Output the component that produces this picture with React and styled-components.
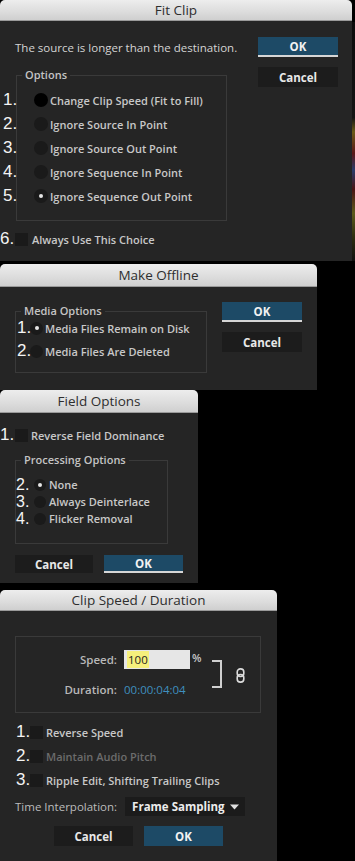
import React from 'react';
import styled, { createGlobalStyle, css } from 'styled-components';

const GlobalStyle = createGlobalStyle`
  html, body {
    margin: 0;
    padding: 0;
    background: #000;
  }
  * {
    box-sizing: border-box;
  }
`;

const Page = styled.div`
  width: 355px;
  height: 861px;
  overflow: hidden;
  background: #000;
  display: flex;
  flex-direction: column;
  font-family: 'Open Sans', 'DejaVu Sans', sans-serif;
  font-size: 11px;
  font-weight: 600;
  color: #c8c8c8;
`;

const TopStrip = styled.div`
  display: flex;
`;

const VideoEdge = styled.div`
  flex: 1;
  margin-top: 22px;
  height: 239px;
  background: linear-gradient(
    180deg,
    #0c0c0c 0%,
    #151515 40%,
    #6b5a18 46%,
    #5a1818 55%,
    #2a3c6a 62%,
    #4a1414 70%,
    #5c5a1c 80%,
    #2d2d10 90%,
    #111 100%
  );
`;

const Window = styled.section`
  width: ${(p) => p.$w}px;
  margin-top: ${(p) => p.$gap || 0}px;
  flex-shrink: 0;
`;

const TitleBar = styled.header`
  height: ${(p) => p.$h}px;
  border-radius: 5px 5px 0 0;
  background: linear-gradient(180deg, #ededed 0%, #dcdcdc 60%, #cfcfcf 100%);
  border-bottom: 1px solid #9a9a9a;
  display: flex;
  align-items: center;
  justify-content: center;
  font-family: 'Open Sans', 'DejaVu Sans', sans-serif;
  font-weight: 400;
  font-size: 13.5px;
  color: #2e2e2e;
`;

const Body = styled.div`
  height: ${(p) => p.$h}px;
  background: #252525;
  padding: ${(p) => p.$pad};
  position: relative;
`;

const Split = styled.div`
  display: flex;
  align-items: flex-start;
`;

const Main = styled.div`
  flex: 1;
  display: flex;
  flex-direction: column;
`;

const ButtonCol = styled.div`
  width: 80px;
  display: flex;
  flex-direction: column;
  gap: 10px;
`;

const ButtonRow = styled.div`
  display: flex;
  gap: 11px;
  justify-content: ${(p) => p.$justify || 'flex-start'};
  margin-top: ${(p) => p.$top}px;
  padding-right: ${(p) => p.$right || 0}px;
`;

const Button = styled.button`
  width: ${(p) => p.$w || 80}px;
  height: ${(p) => p.$h || 20}px;
  border: none;
  padding: 0;
  font-family: 'Open Sans', 'DejaVu Sans', sans-serif;
  font-size: 11.5px;
  font-weight: 700;
  color: #e8e8e8;
  background: #1c1c1c;
  ${(p) =>
    p.$primary &&
    css`
      background: #1d4a66;
      color: #f2f2f2;
    `}
  ${(p) =>
    p.$focus &&
    css`
      border-bottom: 2px solid #d6d6d6;
    `}
`;

const Message = styled.div`
  height: 20px;
  display: flex;
  align-items: center;
  font-weight: 400;
  font-size: 11.5px;
  color: #d4d4d4;
`;

const GroupBox = styled.fieldset`
  margin: ${(p) => p.$margin};
  width: ${(p) => p.$w}px;
  padding: ${(p) => p.$pad};
  border: 1px solid #3a3a3a;
  min-width: 0;
`;

const Legend = styled.legend`
  margin-left: 5px;
  padding: 0 3px;
  line-height: 14px;
  font-weight: 600;
  color: #c4c4c4;
`;

const Row = styled.div`
  position: relative;
  height: ${(p) => p.$h}px;
  display: flex;
  align-items: center;
  gap: ${(p) => p.$gap || 2}px;
  padding-left: ${(p) => p.$indent || 0}px;
  margin-top: ${(p) => p.$top || 0}px;
  color: ${(p) => (p.$disabled ? '#6c6c6c' : '#c8c8c8')};
`;

const Num = styled.span`
  position: absolute;
  left: ${(p) => p.$x}px;
  top: 50%;
  transform: translateY(-50%);
  font-family: 'Liberation Sans', Arial, sans-serif;
  font-weight: 400;
  font-size: ${(p) => p.$size || 17}px;
  line-height: 12px;
  color: #f4f4f4;
`;

const Radio = styled.span`
  width: ${(p) => p.$size}px;
  height: ${(p) => p.$size}px;
  border-radius: 50%;
  flex-shrink: 0;
  background: ${(p) => (p.$hot ? '#000' : '#1a1a1a')};
  display: flex;
  align-items: center;
  justify-content: center;
  &::after {
    content: '';
    display: ${(p) => (p.$on ? 'block' : 'none')};
    width: 4px;
    height: 4px;
    border-radius: 50%;
    background: #e6e6e6;
  }
`;

const Check = styled.span`
  width: ${(p) => p.$size || 13}px;
  height: ${(p) => p.$size || 13}px;
  flex-shrink: 0;
  background: #1a1a1a;
`;

const Panel = styled.div`
  width: 246px;
  height: 77px;
  border: 1px solid #3a3a3a;
  padding-top: 12px;
  display: flex;
  align-items: flex-start;
`;

const Fields = styled.div`
  display: grid;
  grid-template-columns: 101px 66px 8px;
  grid-auto-rows: 20px;
  row-gap: 10px;
  column-gap: 7px;
  align-items: center;
`;

const FieldLabel = styled.span`
  text-align: right;
  font-weight: 600;
  font-size: 11.5px;
  color: #b8b8b8;
`;

const SpeedInput = styled.div`
  height: 19px;
  background: #e6e6e6;
  padding-left: 3px;
  display: flex;
  align-items: center;
  font-weight: 400;
  font-size: 11.5px;
  color: #1e1e1e;
  mark {
    background: #f6f07c;
    color: #1e1e1e;
    padding: 1px 1px;
  }
`;

const Percent = styled.span`
  margin-left: -5px;
  align-self: start;
  margin-top: 1px;
  font-weight: 600;
  color: #c8c8c8;
`;

const Timecode = styled.span`
  font-weight: 400;
  font-size: 11.5px;
  color: #3f8fbf;
`;

const Bracket = styled.div`
  width: 10px;
  height: 28px;
  margin: 11px 0 0 7px;
  border: 2px solid #d0d0d0;
  border-left: none;
`;

const LinkIcon = styled.svg`
  margin: 19px 0 0 14px;
`;

const InterpRow = styled.div`
  display: flex;
  align-items: center;
  gap: 8px;
  margin-top: 5px;
`;

const InterpLabel = styled.span`
  font-weight: 400;
  font-size: 11.5px;
  color: #bcbcbc;
`;

const Dropdown = styled.div`
  width: 120px;
  height: 19px;
  background: #1b1b1b;
  display: flex;
  align-items: center;
  justify-content: space-between;
  padding: 0 6px 0 7px;
  font-weight: 700;
  font-size: 11.5px;
  color: #ececec;
`;

const FitClip = () => (
  <TopStrip>
    <Window $w={352}>
      <TitleBar $h={21}>Fit Clip</TitleBar>
      <Body $h={240} $pad="16px 14px 0 15px">
        <Split>
          <Main>
            <Message>The source is longer than the destination.</Message>
            <GroupBox $w={211} $margin="11px 0 0 1px" $pad="6px 0 12px 0">
              <Legend>Options</Legend>
              {[
                ['1.', 'Change Clip Speed (Fit to Fill)', false, true],
                ['2.', 'Ignore Source In Point'],
                ['3.', 'Ignore Source Out Point'],
                ['4.', 'Ignore Sequence In Point'],
                ['5.', 'Ignore Sequence Out Point', true],
              ].map(([n, label, on, hot]) => (
                <Row key={n} $h={24} $indent={17}>
                  <Num $x={-14}>{n}</Num>
                  <Radio $size={14} $on={on} $hot={hot} />
                  <span>{label}</span>
                </Row>
              ))}
            </GroupBox>
            <Row $h={20} $top={8} $gap={4}>
              <Num $x={-15}>6.</Num>
              <Check $size={13} />
              <span>Always Use This Choice</span>
            </Row>
          </Main>
          <ButtonCol>
            <Button $primary $focus>OK</Button>
            <Button>Cancel</Button>
          </ButtonCol>
        </Split>
      </Body>
    </Window>
    <VideoEdge />
  </TopStrip>
);

const MakeOffline = () => (
  <Window $w={317} $gap={3}>
    <TitleBar $h={23}>Make Offline</TitleBar>
    <Body $h={103} $pad="15px 15px 0 15px">
      <Split>
        <Main>
          <GroupBox $w={192} $margin="2px 0 0 0" $pad="0 0 11px 0">
            <Legend>Media Options</Legend>
            <Row $h={20} $indent={14} $gap={2}>
              <Num $x={1}>1.</Num>
              <Radio $size={13} $on />
              <span>Media Files Remain on Disk</span>
            </Row>
            <Row $h={20} $indent={14} $gap={2} $top={3}>
              <Num $x={1}>2.</Num>
              <Radio $size={13} />
              <span>Media Files Are Deleted</span>
            </Row>
          </GroupBox>
        </Main>
        <ButtonCol>
          <Button $primary $focus>OK</Button>
          <Button>Cancel</Button>
        </ButtonCol>
      </Split>
    </Body>
  </Window>
);

const FieldOptions = () => (
  <Window $w={198}>
    <TitleBar $h={23}>Field Options</TitleBar>
    <Body $h={170} $pad="12px 0 0 15px">
      <Row $h={20} $gap={3}>
        <Num $x={-15}>1.</Num>
        <Check $size={13} />
        <span>Reverse Field Dominance</span>
      </Row>
      <GroupBox $w={153} $margin="8px 0 0 0" $pad="9px 0 16px 0">
        <Legend>Processing Options</Legend>
        {[
          ['2.', 'None', true],
          ['3.', 'Always Deinterlace'],
          ['4.', 'Flicker Removal'],
        ].map(([n, label, on]) => (
          <Row key={n} $h={17} $indent={18} $gap={3}>
            <Num $x={0} $size={16}>{n}</Num>
            <Radio $size={12} $on={on} />
            <span>{label}</span>
          </Row>
        ))}
      </GroupBox>
      <ButtonRow $top={11}>
        <Button $w={78} $h={18}>Cancel</Button>
        <Button $w={79} $h={18} $primary $focus>OK</Button>
      </ButtonRow>
    </Body>
  </Window>
);

const ClipSpeed = () => (
  <Window $w={277} $gap={7}>
    <TitleBar $h={21}>Clip Speed / Duration</TitleBar>
    <Body $h={250} $pad="25px 0 0 15px">
      <Panel>
        <Fields>
          <FieldLabel>Speed:</FieldLabel>
          <SpeedInput>
            <mark>100</mark>
          </SpeedInput>
          <Percent>%</Percent>
          <FieldLabel>Duration:</FieldLabel>
          <Timecode>00:00:04:04</Timecode>
          <span />
        </Fields>
        <Bracket />
        <LinkIcon width="9" height="15" viewBox="0 0 9 15">
          <rect x="1.2" y="0.9" width="6.6" height="7.6" rx="3.2" fill="none" stroke="#dcdcdc" strokeWidth="1.6" />
          <rect x="1.2" y="6.5" width="6.6" height="7.6" rx="3.2" fill="none" stroke="#dcdcdc" strokeWidth="1.6" />
        </LinkIcon>
      </Panel>
      {[
        ['1.', 'Reverse Speed'],
        ['2.', 'Maintain Audio Pitch', true],
        ['3.', 'Ripple Edit, Shifting Trailing Clips'],
      ].map(([n, label, disabled], i) => (
        <Row key={n} $h={24} $indent={15} $gap={3} $top={i === 0 ? 7 : 0} $disabled={disabled}>
          <Num $x={1}>{n}</Num>
          <Check $size={13} />
          <span>{label}</span>
        </Row>
      ))}
      <InterpRow>
        <InterpLabel>Time Interpolation:</InterpLabel>
        <Dropdown>
          <span>Frame Sampling</span>
          <svg width="9" height="6" viewBox="0 0 9 6">
            <path d="M0 0.5 L9 0.5 L4.5 5.5 Z" fill="#dedede" />
          </svg>
        </Dropdown>
      </InterpRow>
      <ButtonRow $top={10} $justify="center" $right={15}>
        <Button $w={79}>Cancel</Button>
        <Button $w={79} $primary>OK</Button>
      </ButtonRow>
    </Body>
  </Window>
);

export default function App() {
  return (
    <Page>
      <GlobalStyle />
      <FitClip />
      <MakeOffline />
      <FieldOptions />
      <ClipSpeed />
    </Page>
  );
}
